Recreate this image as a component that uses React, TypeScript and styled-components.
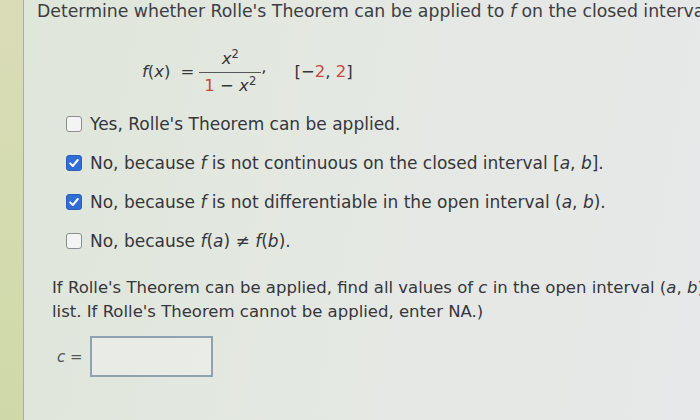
import React from "react";
import styled, { createGlobalStyle } from "styled-components";

interface Choice {
  checked: boolean;
  label: React.ReactNode;
}

const GlobalStyle = createGlobalStyle`
  html, body {
    margin: 0;
    padding: 0;
  }
  body {
    background: #e4e8e3;
    font-family: "DejaVu Sans", Verdana, sans-serif;
  }
`;

const Page = styled.div`
  display: flex;
  width: 700px;
  height: 420px;
  overflow: hidden;
`;

const Margin = styled.div`
  flex: 0 0 23px;
  background: linear-gradient(180deg, #dadcb8 0%, #d3dbae 60%, #cfd9a8 100%);
  border-right: 1px solid #a9ae9f;
`;

const Panel = styled.main`
  flex: 1;
  min-width: 0;
  overflow: hidden;
  padding: 1px 0 0 13px;
  background: linear-gradient(100deg, #dfe6da 0%, #e4e8e2 45%, #e7e8e9 100%);
  color: #36363b;
  font-size: 17px;
`;

const Title = styled.p`
  margin: 0;
  font-size: 17.3px;
  line-height: 20px;
  white-space: nowrap;
  color: #3d3d42;
`;

const Var = styled.i`
  font-style: italic;
`;

const Red = styled.span`
  color: #c64a3c;
`;

const Sup = styled.sup`
  font-size: 0.7em;
  line-height: 0;
  vertical-align: 0.55em;
`;

const Formula = styled.div`
  display: flex;
  align-items: center;
  height: 56px;
  margin-top: 23px;
  padding-left: 105px;
  font-size: 16.5px;
  line-height: 22px;
  white-space: nowrap;
`;

const Equals = styled.span`
  margin: 0 5px 0 10px;
`;

const Fraction = styled.span`
  display: inline-flex;
  flex-direction: column;
  align-items: center;
`;

const Numer = styled.span`
  padding: 0 0 2px;
`;

const Bar = styled.span`
  align-self: stretch;
  height: 1px;
  background: #56565b;
`;

const Denom = styled.span`
  padding: 2px 5px 0;
`;

const Comma = styled.span`
  margin-bottom: 10px;
`;

const Interval = styled.span`
  margin-left: 28px;
`;

const OptionList = styled.ul`
  list-style: none;
  margin: 4px 0 0;
  padding: 0 0 0 29px;
`;

const Option = styled.li`
  display: flex;
  align-items: center;
  gap: 8px;
  height: 39px;
  white-space: nowrap;
`;

const Box = styled.span<{ $checked: boolean }>`
  display: inline-flex;
  align-items: center;
  justify-content: center;
  flex: 0 0 16px;
  width: 16px;
  height: 16px;
  box-sizing: border-box;
  border-radius: 3px;
  border: 1px solid ${(p) => (p.$checked ? "#2a5fb9" : "#8b8e92")};
  background: ${(p) => (p.$checked ? "#2f6ed6" : "#f3f4f3")};
`;

const Prompt = styled.p`
  margin: 16px 0 0;
  padding-left: 15px;
  font-size: 16.5px;
  line-height: 24px;
  white-space: nowrap;
`;

const AnswerRow = styled.div`
  display: flex;
  align-items: center;
  gap: 7px;
  margin-top: 12px;
  padding-left: 20px;
`;

const AnswerLabel = styled.span`
  font-size: 15px;
  color: #55565a;
`;

const AnswerBox = styled.div`
  width: 123px;
  height: 41px;
  box-sizing: border-box;
  border: 2px solid #8fa2b2;
  background: rgba(248, 250, 250, 0.3);
`;

const Check = () => (
  <svg width="12" height="12" viewBox="0 0 12 12">
    <polyline
      points="2.2,6.4 4.8,9 9.8,3"
      fill="none"
      stroke="#fff"
      strokeWidth="2"
      strokeLinecap="round"
      strokeLinejoin="round"
    />
  </svg>
);

const choices: Choice[] = [
  { checked: false, label: <>Yes, Rolle's Theorem can be applied.</> },
  {
    checked: true,
    label: (
      <>
        No, because <Var>f</Var> is not continuous on the closed interval [<Var>a</Var>, <Var>b</Var>].
      </>
    ),
  },
  {
    checked: true,
    label: (
      <>
        No, because <Var>f</Var> is not differentiable in the open interval (<Var>a</Var>, <Var>b</Var>).
      </>
    ),
  },
  {
    checked: false,
    label: (
      <>
        No, because <Var>f</Var>(<Var>a</Var>) ≠ <Var>f</Var>(<Var>b</Var>).
      </>
    ),
  },
];

export default function App() {
  return (
    <>
      <GlobalStyle />
      <Page>
        <Margin />
        <Panel>
          <Title>
            Determine whether Rolle's Theorem can be applied to <Var>f</Var> on the closed interval [<Var>a</Var>,{" "}
            <Var>b</Var>].
          </Title>

          <Formula>
            <span>
              <Var>f</Var>(<Var>x</Var>)
            </span>
            <Equals>=</Equals>
            <Fraction>
              <Numer>
                <Var>x</Var>
                <Sup>2</Sup>
              </Numer>
              <Bar />
              <Denom>
                <Red>1</Red> − <Var>x</Var>
                <Sup>2</Sup>
              </Denom>
            </Fraction>
            <Comma>,</Comma>
            <Interval>
              [−<Red>2</Red>, <Red>2</Red>]
            </Interval>
          </Formula>

          <OptionList>
            {choices.map((c, i) => (
              <Option key={i}>
                <Box $checked={c.checked}>{c.checked && <Check />}</Box>
                <span>{c.label}</span>
              </Option>
            ))}
          </OptionList>

          <Prompt>
            If Rolle's Theorem can be applied, find all values of <Var>c</Var> in the open interval (<Var>a</Var>,{" "}
            <Var>b</Var>).
            <br />
            list. If Rolle's Theorem cannot be applied, enter NA.)
          </Prompt>

          <AnswerRow>
            <AnswerLabel>
              <Var>c</Var> =
            </AnswerLabel>
            <AnswerBox />
          </AnswerRow>
        </Panel>
      </Page>
    </>
  );
}
